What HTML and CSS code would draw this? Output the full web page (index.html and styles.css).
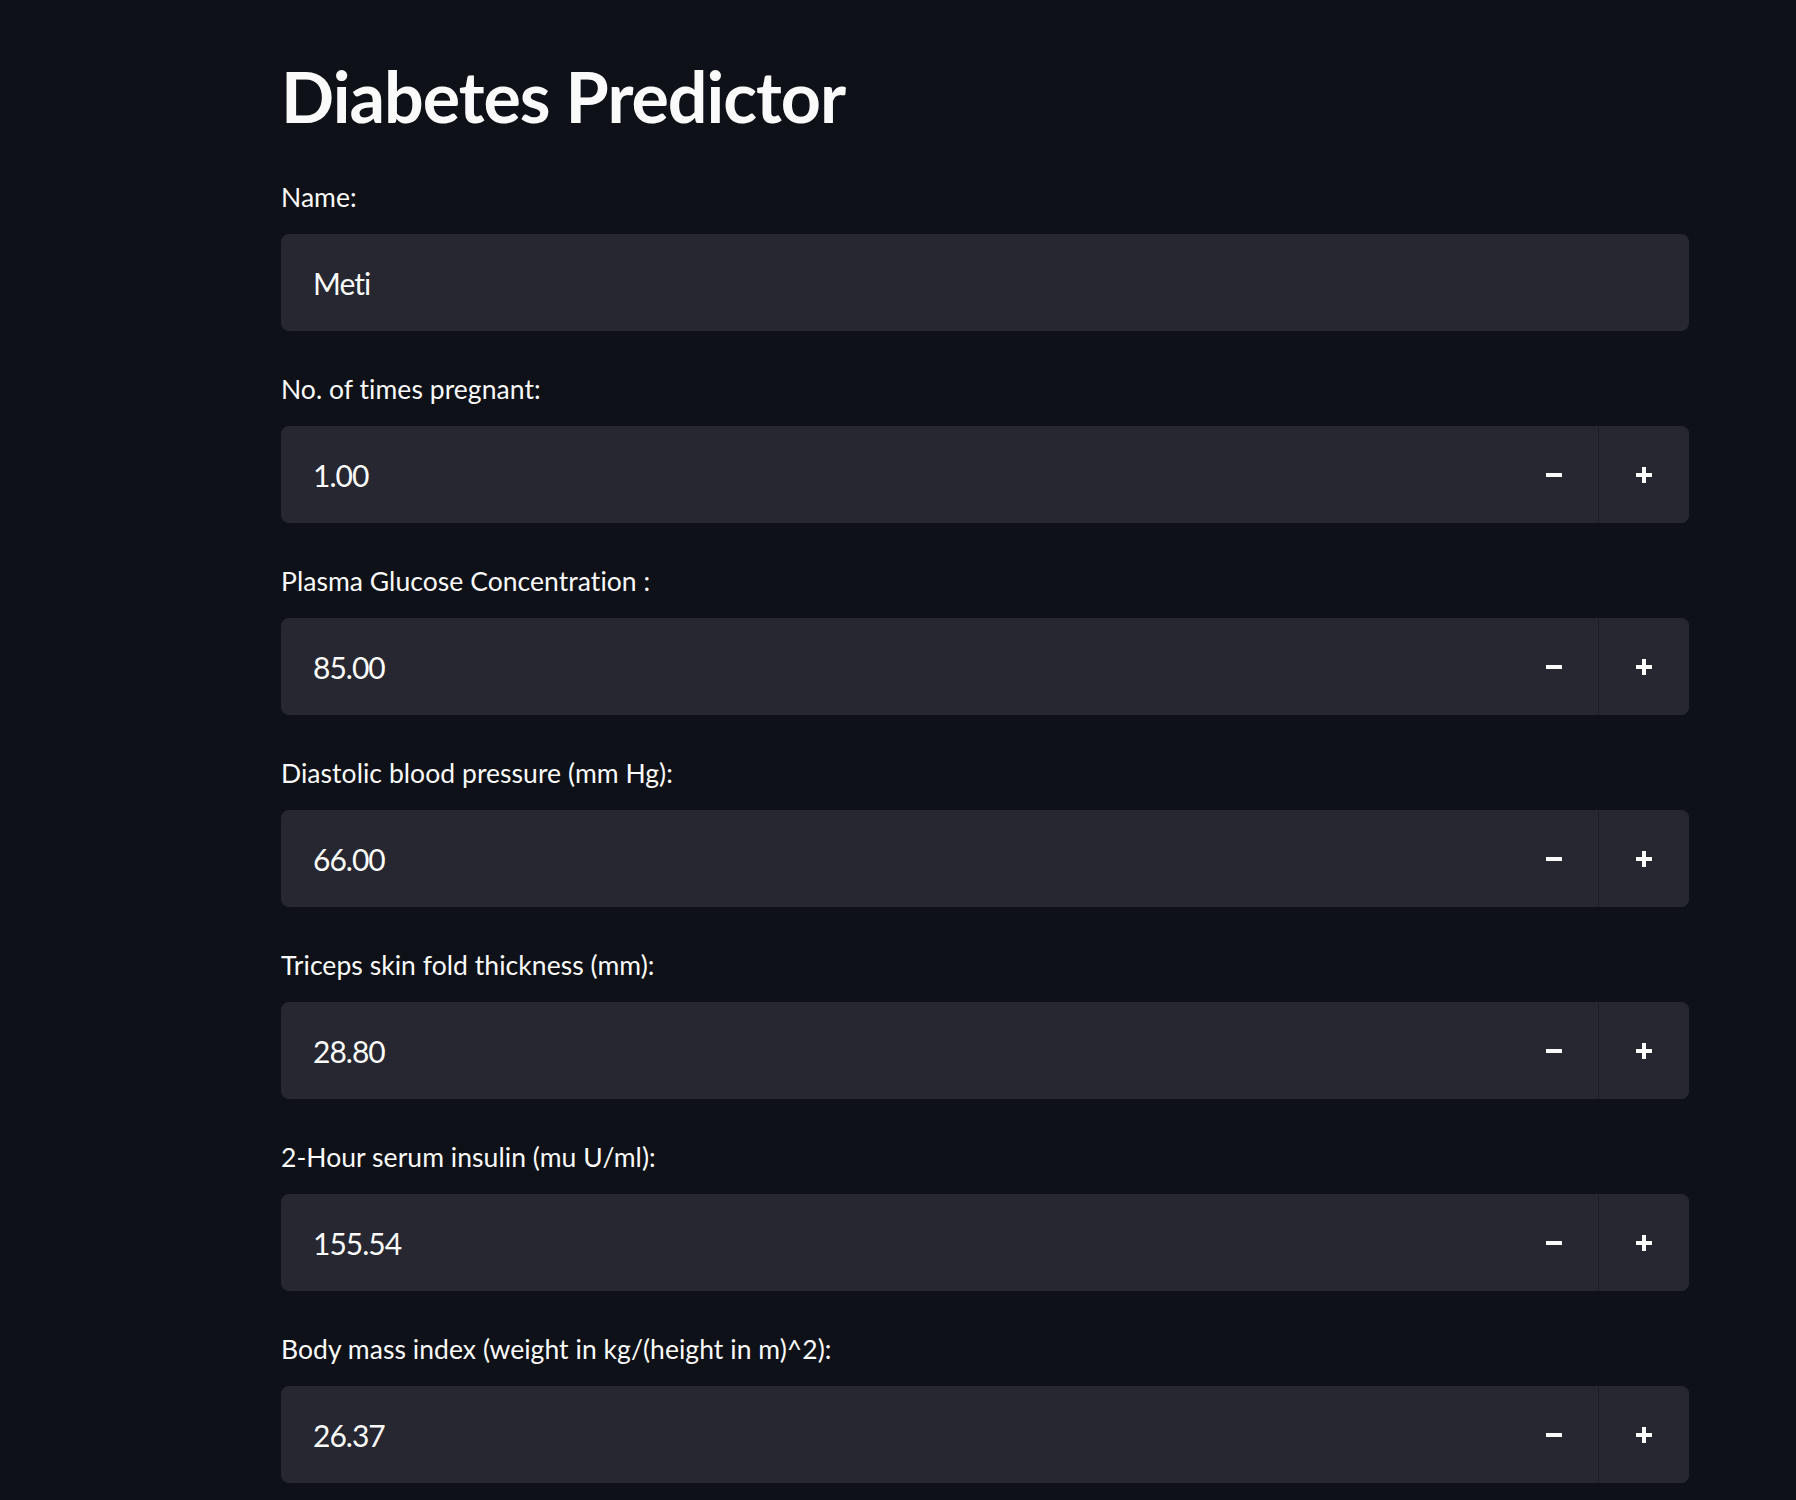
FILE: index.html
```html
<!DOCTYPE html>
<html lang="en">
<head>
<meta charset="utf-8">
<title>Diabetes Predictor</title>
<link rel="stylesheet" href="styles.css">
</head>
<body>
<main class="page">
  <h1 class="title">Diabetes Predictor</h1>

  <div class="field">
    <label class="label">Name:</label>
    <div class="box">
      <input class="value" type="text" value="Meti">
    </div>
  </div>

  <div class="field">
    <label class="label">No. of times pregnant:</label>
    <div class="box">
      <input class="value" type="text" value="1.00">
      <button class="step step-minus"><svg width="16" height="16" viewBox="0 0 16 16"><rect x="0" y="6" width="16" height="4" fill="#fafafa"/></svg></button>
      <button class="step"><svg width="16" height="16" viewBox="0 0 16 16"><rect x="0" y="6" width="16" height="4" fill="#fafafa"/><rect x="6" y="0" width="4" height="16" fill="#fafafa"/></svg></button>
    </div>
  </div>

  <div class="field">
    <label class="label">Plasma Glucose Concentration :</label>
    <div class="box">
      <input class="value" type="text" value="85.00">
      <button class="step step-minus"><svg width="16" height="16" viewBox="0 0 16 16"><rect x="0" y="6" width="16" height="4" fill="#fafafa"/></svg></button>
      <button class="step"><svg width="16" height="16" viewBox="0 0 16 16"><rect x="0" y="6" width="16" height="4" fill="#fafafa"/><rect x="6" y="0" width="4" height="16" fill="#fafafa"/></svg></button>
    </div>
  </div>

  <div class="field">
    <label class="label">Diastolic blood pressure (mm Hg):</label>
    <div class="box">
      <input class="value" type="text" value="66.00">
      <button class="step step-minus"><svg width="16" height="16" viewBox="0 0 16 16"><rect x="0" y="6" width="16" height="4" fill="#fafafa"/></svg></button>
      <button class="step"><svg width="16" height="16" viewBox="0 0 16 16"><rect x="0" y="6" width="16" height="4" fill="#fafafa"/><rect x="6" y="0" width="4" height="16" fill="#fafafa"/></svg></button>
    </div>
  </div>

  <div class="field">
    <label class="label">Triceps skin fold thickness (mm):</label>
    <div class="box">
      <input class="value" type="text" value="28.80">
      <button class="step step-minus"><svg width="16" height="16" viewBox="0 0 16 16"><rect x="0" y="6" width="16" height="4" fill="#fafafa"/></svg></button>
      <button class="step"><svg width="16" height="16" viewBox="0 0 16 16"><rect x="0" y="6" width="16" height="4" fill="#fafafa"/><rect x="6" y="0" width="4" height="16" fill="#fafafa"/></svg></button>
    </div>
  </div>

  <div class="field">
    <label class="label">2-Hour serum insulin (mu U/ml):</label>
    <div class="box">
      <input class="value" type="text" value="155.54">
      <button class="step step-minus"><svg width="16" height="16" viewBox="0 0 16 16"><rect x="0" y="6" width="16" height="4" fill="#fafafa"/></svg></button>
      <button class="step"><svg width="16" height="16" viewBox="0 0 16 16"><rect x="0" y="6" width="16" height="4" fill="#fafafa"/><rect x="6" y="0" width="4" height="16" fill="#fafafa"/></svg></button>
    </div>
  </div>

  <div class="field">
    <label class="label">Body mass index (weight in kg/(height in m)^2):</label>
    <div class="box">
      <input class="value" type="text" value="26.37">
      <button class="step step-minus"><svg width="16" height="16" viewBox="0 0 16 16"><rect x="0" y="6" width="16" height="4" fill="#fafafa"/></svg></button>
      <button class="step"><svg width="16" height="16" viewBox="0 0 16 16"><rect x="0" y="6" width="16" height="4" fill="#fafafa"/><rect x="6" y="0" width="4" height="16" fill="#fafafa"/></svg></button>
    </div>
  </div>
</main>
</body>
</html>
```

FILE: styles.css
```css
html, body {
  margin: 0;
  padding: 0;
  background: #0e1117;
  color: #fafafa;
  font-family: "Lato", "Noto Sans", sans-serif;
  font-variant-ligatures: none;
}

.page {
  width: 1408px;
  margin-left: 281px;
  padding-top: 54px;
  display: flex;
  flex-direction: column;
}

.title {
  margin: 0 0 41px 0;
  font-size: 70px;
  line-height: 84px;
  font-weight: 700;
  letter-spacing: -1px;
}

.field {
  display: flex;
  flex-direction: column;
  margin-bottom: 40px;
}

.label {
  font-size: 26.5px;
  letter-spacing: 0.05px;
  line-height: 36px;
  height: 36px;
  margin-bottom: 19px;
  color: #fafafa;
}

.box {
  display: flex;
  align-items: stretch;
  height: 97px;
  background: #262730;
  border-radius: 8px;
  overflow: hidden;
}

.value {
  flex: 1;
  min-width: 0;
  border: none;
  outline: none;
  background: transparent;
  color: #fafafa;
  font-family: "Lato", "Noto Sans", sans-serif;
  font-variant-ligatures: none;
  font-size: 30px;
  letter-spacing: -1px;
  padding: 0 0 0 32px;
  margin: 0;
}

.step {
  width: 90px;
  flex: 0 0 90px;
  border: none;
  margin: 0;
  padding: 0;
  background: #262730;
  display: flex;
  align-items: center;
  justify-content: center;
}

.step-minus {
  border-right: 1px solid #1c1d25;
}

.step svg {
  display: block;
}
```
